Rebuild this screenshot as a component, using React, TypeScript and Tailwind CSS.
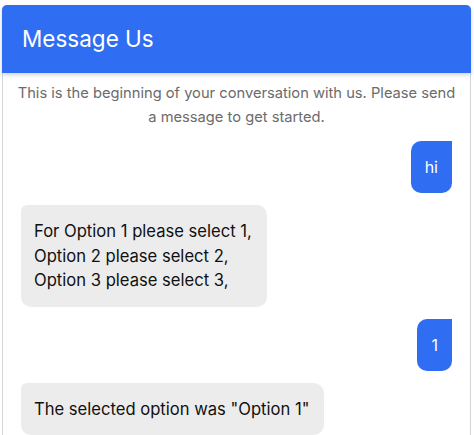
const messages: { from: "user" | "bot"; lines: string[] }[] = [
  { from: "user", lines: ["hi"] },
  {
    from: "bot",
    lines: [
      "For Option 1 please select 1,",
      "Option 2 please select 2,",
      "Option 3 please select 3,",
    ],
  },
  { from: "user", lines: ["1"] },
  { from: "bot", lines: ['The selected option was "Option 1"'] },
];

export default function App() {
  return (
    <div
      className="h-[435px] w-[474px] overflow-hidden bg-white pl-[2px] pr-[3px] pt-[5px]"
      style={{ fontFamily: "Inter, 'Noto Sans', sans-serif" }}
    >
      <div className="flex h-[460px] flex-col rounded-t-[5px] border-x border-[#d6d6d6]">
        <div className="relative z-10 -mx-px flex h-[68px] items-center rounded-t-[5px] bg-[#2f6df2] px-[20px] shadow-[0_2px_4px_rgba(0,0,0,0.18)]">
          <h1 className="text-[22.5px] font-normal text-white">Message Us</h1>
        </div>
        <div className="flex flex-col gap-[12px] px-[18px] pt-[8px]">
          <p className="-mx-[6px] text-center text-[14.7px] leading-[24px] text-[#6b6b6b]">
            This is the beginning of your conversation with us. Please send a
            message to get started.
          </p>
          {messages.map((m, i) =>
            m.from === "user" ? (
              <div key={i} className="flex justify-end">
                <div className="rounded-[10px] rounded-tr-none bg-[#2f6df2] px-[14px] py-[14px] text-[16px] leading-[24px] text-white">
                  {m.lines[0]}
                </div>
              </div>
            ) : (
              <div key={i} className="flex justify-start">
                <div className="rounded-[10px] rounded-tl-[6px] bg-[#ececec] px-[13px] py-[14px] pr-[15px] text-[16.6px] leading-[24.5px] text-[#111]">
                  {m.lines.map((l, j) => (
                    <div key={j}>{l}</div>
                  ))}
                </div>
              </div>
            )
          )}
        </div>
      </div>
    </div>
  );
}
